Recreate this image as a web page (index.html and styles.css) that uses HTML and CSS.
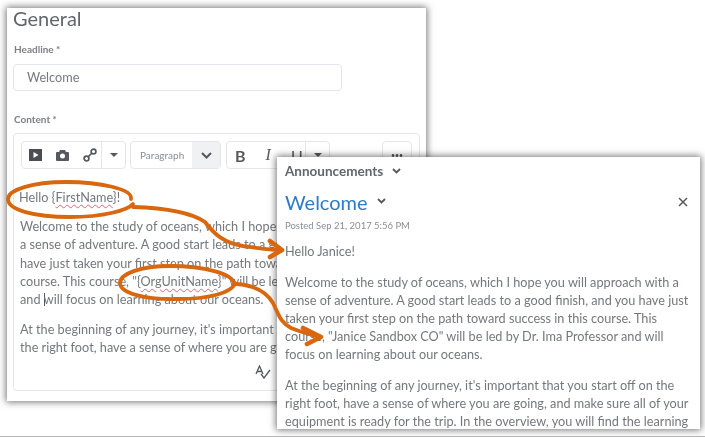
FILE: index.html
```html
<!DOCTYPE html>
<html lang="en">
<head>
<meta charset="UTF-8">
<meta name="viewport" content="width=device-width, initial-scale=1.0">
<title>Replace strings</title>
<link rel="stylesheet" href="styles.css">
</head>
<body>

<div class="canvas">
  <!-- editor window -->
  <section class="window editor-window">
    <h2 class="page-title">General</h2>
    <div class="field-label headline-label">Headline *</div>
    <div class="text-input">Welcome</div>
    <div class="field-label content-label">Content *</div>
    <div class="editor">
      <div class="toolbar">
        <div class="tool-group group-insert">
          <span class="tool-icons">
            <svg width="13" height="12" viewBox="0 0 13 12"><path fill="#4a4d52" fill-rule="evenodd" d="M0 0h13v12H0zM4.500 3v6l5-3z"/></svg>
            <svg width="13" height="11" viewBox="0 0 13 11"><path fill="#55585c" fill-rule="evenodd" d="M4 0h5l1 2h2a1 1 0 0 1 1 1v7a1 1 0 0 1-1 1H1a1 1 0 0 1-1-1V3a1 1 0 0 1 1-1h2zM6.500 3.500a2.500 2.500 0 1 0 0 5 2.500 2.500 0 0 0 0-5z"/></svg>
            <svg width="14" height="14" viewBox="0 0 14 14"><g fill="none" stroke="#55585c" stroke-width="1.700"><circle cx="3.500" cy="10.500" r="2.400"/><circle cx="10.500" cy="3.500" r="2.400"/><path d="M5.500 8.500l3-3"/></g></svg>
          </span>
          <span class="tool-caret"><i class="caret"></i></span>
        </div>
        <div class="tool-group group-format">
          <span class="format-name">Paragraph</span>
          <span class="format-arrow">
            <svg width="11" height="7" viewBox="0 0 11 7"><path fill="none" stroke="#55585c" stroke-width="2" d="M1 1l4.500 4.500L10 1"/></svg>
          </span>
        </div>
        <div class="tool-group group-style">
          <span class="style-letters">
            <b class="letter-b">B</b>
            <i class="letter-i">I</i>
            <span class="letter-u">U</span>
          </span>
          <span class="tool-caret"><i class="caret"></i></span>
        </div>
        <div class="tool-group group-more"><span class="dots">•••</span></div>
      </div>
      <div class="editor-text">
        <p class="hello">Hello {<span class="misspelled">FirstName</span>}!</p>
        <p>Welcome to the study of oceans, which I hope you will approach with<br>
        a sense of adventure. A good start leads to a good finish, and you<br>
        have just taken your first step on the path toward success in this<br>
        course. This course, "{<span class="misspelled">OrgUnitName</span>}" will be led by Dr. Ima Professor<br>
        and <span class="text-cursor"></span>will focus on learning about our oceans.</p>
        <p>At the beginning of any journey, it's important that you start off on<br>
        the right foot, have a sense of where you are going, and make sure</p>
      </div>
      <div class="editor-foot">
        <svg width="16" height="14" viewBox="0 0 16 14"><g fill="none" stroke="#55585c" stroke-width="1.300"><path d="M1 9L4.500 1 8 9M2.400 6.500h4.200"/><path d="M6 9l3 4 6-8"/></g></svg>
      </div>
    </div>
  </section>

  <!-- published announcement -->
  <section class="window notice-window">
    <div class="widget-title">Announcements
      <svg width="9" height="6" viewBox="0 0 9 6"><path fill="none" stroke="#55585c" stroke-width="1.800" d="M1 1l3.500 3.500L8 1"/></svg>
    </div>
    <div class="notice-head">
      <h2 class="notice-title">Welcome</h2>
      <svg class="notice-arrow" width="9" height="6" viewBox="0 0 9 6"><path fill="none" stroke="#55585c" stroke-width="1.800" d="M1 1l3.500 3.500L8 1"/></svg>
      <svg class="notice-close" width="10" height="10" viewBox="0 0 10 10"><path fill="none" stroke="#55585c" stroke-width="1.500" d="M1 1l8 8M9 1l-8 8"/></svg>
    </div>
    <div class="posted">Posted Sep 21, 2017 5:56 PM</div>
    <div class="notice-text">
      <p>Hello Janice!</p>
      <p>Welcome to the study of oceans, which I hope you will approach with a<br>
      sense of adventure. A good start leads to a good finish, and you have just<br>
      taken your first step on the path toward success in this course. This<br>
      course, "Janice Sandbox CO" will be led by Dr. Ima Professor and will<br>
      focus on learning about our oceans.</p>
      <p>At the beginning of any journey, it's important that you start off on the<br>
      right foot, have a sense of where you are going, and make sure all of your<br>
      equipment is ready for the trip. In the overview, you will find the learning</p>
    </div>
  </section>

  <!-- hand drawn callouts -->
  <svg class="callouts" width="705" height="437" viewBox="0 0 705 437">
    <g fill="none" stroke="#d8670f" stroke-width="3.800" stroke-linecap="round" stroke-linejoin="round">
      <path d="M131 199C133 189 100 182 66 182 32 182 8 190 8 199 8 210 34 217 70 217 104 217 128 210 133 204"/>
      <path d="M133 207C165 208 192 213 205 222 214 234 224 243 243 246 258 248 270 250 280 250"/>
      <path stroke-width="4.600" d="M270 241L282 250 270 257"/>
      <path d="M234 283C232 274 205 266 170 266 140 266 120 274 120 283 120 293 145 300 178 299 208 299 232 293 235 283"/>
      <path d="M236 284C252 285 266 291 273 303 279 315 280 322 291 328 301 332 312 335 320 337"/>
      <path stroke-width="4.600" d="M303 328L321 337 307 344"/>
    </g>
  </svg>

  <div class="page-edge"></div>
</div>

</body>
</html>
```

FILE: styles.css
```css
body {
  margin: 0;
  background-color: #fff;
  font-family: Lato, "Open Sans", sans-serif;
  color: #74787d;
}
p {
  margin: 0;
}
.canvas {
  position: relative;
  width: 705px;
  height: 437px;
  overflow: hidden;
}
.window {
  position: absolute;
  box-sizing: border-box;
  background-color: #fff;
  filter: blur(0.5px);
}
.editor-window {
  left: 7px;
  top: 8px;
  width: 419px;
  height: 393px;
  padding: 0 6px;
  box-shadow: 0 0 7px 1px rgba(0, 0, 0, 0.55);
}
.page-title {
  margin: 0;
  font-size: 20px;
  font-weight: 400;
  line-height: 20px;
  color: #62666b;
}
.field-label {
  font-size: 10px;
  font-weight: 700;
  line-height: 12px;
  color: #7d8085;
}
.headline-label {
  margin: 15px 0 0 1px;
}
.content-label {
  margin: 22px 0 0 1px;
}
.text-input {
  box-sizing: border-box;
  width: 329px;
  height: 27px;
  margin-top: 9px;
  padding-left: 13px;
  border: 1px solid #e3e6ed;
  border-radius: 4px;
  font-size: 12.7px;
  line-height: 25px;
  color: #75797e;
}
.editor {
  box-sizing: border-box;
  width: 407px;
  height: 258px;
  margin-top: 8px;
  padding: 7px 6px;
  border: 1px solid #e3e6ed;
  border-radius: 4px;
}
.toolbar {
  display: flex;
  height: 28px;
}
.tool-group {
  box-sizing: border-box;
  display: flex;
  height: 28px;
  border: 1px solid #e4e6ea;
  border-radius: 4px;
}
.group-insert {
  width: 105px;
  margin-left: 1px;
}
.group-format {
  width: 91px;
  margin-left: 4px;
}
.group-style {
  width: 104px;
  margin-left: 5px;
}
.group-more {
  width: 30px;
  margin-left: 52px;
  justify-content: center;
}
.tool-icons {
  display: flex;
  flex: 1;
  align-items: center;
  gap: 14px;
  padding-left: 7px;
}
.tool-caret {
  display: flex;
  width: 23px;
  align-items: center;
  justify-content: center;
  border-left: 1px solid #e4e6ea;
}
.caret {
  border-top: 4px solid #55585c;
  border-left: 4px solid transparent;
  border-right: 4px solid transparent;
}
.format-name {
  flex: 1;
  padding-left: 9px;
  font-size: 10px;
  line-height: 26px;
  color: #8b8e92;
}
.format-arrow {
  display: flex;
  width: 28px;
  align-items: center;
  justify-content: center;
  background-color: #f0f1f3;
}
.style-letters {
  display: flex;
  flex: 1;
  align-items: center;
  gap: 20px;
  padding-left: 8px;
  color: #55585c;
  font-size: 16px;
}
.letter-i {
  font-family: "Liberation Serif", serif;
}
.dots {
  font-size: 7px;
  line-height: 26px;
  color: #55585c;
}
.editor-text {
  margin-top: 19px;
  font-size: 12.7px;
  line-height: 18.2px;
  white-space: nowrap;
}
.editor-text p {
  margin-bottom: 12px;
}
.hello {
  margin-left: -1px;
}
.editor-text p.hello {
  margin-bottom: 11px;
}
.editor-text p:last-child {
  margin-bottom: 6px;
}
.misspelled {
  text-decoration: underline wavy #e0657a 1px;
  text-underline-offset: 2px;
}
.text-cursor {
  display: inline-block;
  width: 1px;
  height: 13px;
  margin-right: -1px;
  vertical-align: -2px;
  background-color: #55585c;
}
.editor-foot {
  margin: 0 0 0 235px;
}
.notice-window {
  left: 277px;
  top: 157px;
  width: 423px;
  height: 272px;
  padding: 6px 8px;
  overflow: hidden;
  box-shadow: 0 0 7px 1px rgba(0, 0, 0, 0.55);
}
.widget-title {
  display: flex;
  align-items: center;
  gap: 9px;
  font-size: 13.5px;
  font-weight: 700;
  line-height: 16px;
  color: #62666b;
}
.notice-head {
  display: flex;
  align-items: center;
  margin-top: 9px;
  height: 28px;
}
.notice-title {
  margin: 0;
  font-size: 20px;
  font-weight: 400;
  line-height: 28px;
  color: #2b7bc6;
}
.notice-arrow {
  margin: 0 0 3px 9px;
}
.notice-close {
  margin: 0 4px 0 auto;
}
.posted {
  margin-top: 3px;
  font-size: 9.5px;
  line-height: 14px;
  color: #8b8e92;
}
.notice-text {
  margin-top: 9px;
  font-size: 12.7px;
  line-height: 18px;
  white-space: nowrap;
}
.notice-text p {
  margin-bottom: 13px;
}
.callouts {
  position: absolute;
  left: 0;
  top: 0;
  filter: blur(0.3px);
}
.page-edge {
  position: absolute;
  left: 0;
  right: 0;
  bottom: 0;
  height: 1px;
  background-color: #b5b5b5;
}
```
